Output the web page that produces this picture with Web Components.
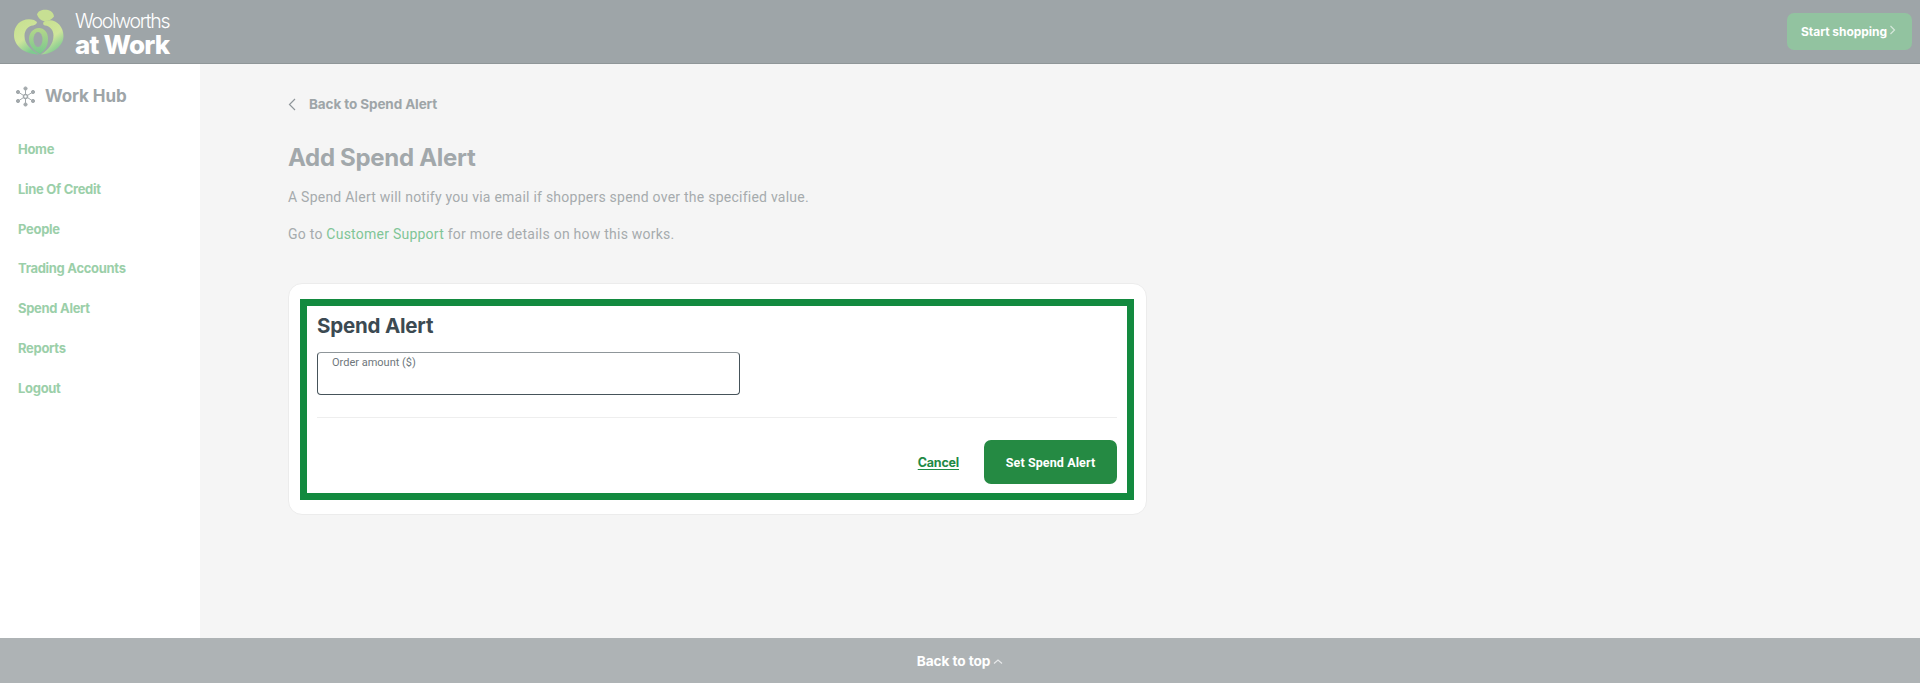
<!DOCTYPE html>
<html lang="en"><head><meta charset="utf-8"><title>Add Spend Alert</title>
<style>
html,body{margin:0;height:100%;overflow:hidden;background:#f5f5f5}
body{font-family:"Roboto",sans-serif}
wh-app{height:683px}
</style></head><body>
<wh-app>
  <wh-header slot="header"></wh-header>
  <wh-sidebar slot="side"></wh-sidebar>
  <wh-main slot="main"></wh-main>
  <wh-footer slot="footer"></wh-footer>
</wh-app>
<script>
function def(name,html){customElements.define(name,class extends HTMLElement{constructor(){super();this.attachShadow({mode:'open'}).innerHTML=html}})}
const head='"Inter","Lato",sans-serif';
def('wh-app',`<style>:host{display:grid;grid-template-columns:200px 1fr;grid-template-rows:64px 1fr 45px;width:1920px}
::slotted([slot=header]),::slotted([slot=footer]){grid-column:1/3}</style>
<slot name="header"></slot><slot name="side"></slot><slot name="main"></slot><slot name="footer"></slot>`);
def('wh-logo',`<style>:host{display:flex;align-items:center;gap:11px;color:#fff}
.w{display:flex;flex-direction:column;font-family:${head};margin-top:5px}
.a{font-size:19.5px;font-weight:300;letter-spacing:-1.3px;line-height:21px}
.b{font-size:26px;font-weight:800;letter-spacing:-.8px;line-height:25px}</style>
<svg width="50" height="46" viewBox="14 9 50 46" fill="none"><defs>
<linearGradient id="g" x1="0" y1="0" x2=".5" y2="1"><stop offset="0" stop-color="#c6df8f"/><stop offset=".6" stop-color="#cfe59b"/><stop offset="1" stop-color="#7fca90"/></linearGradient>
<linearGradient id="g2" x1="0" y1="0" x2="0" y2="1"><stop offset="0" stop-color="#b5d78a"/><stop offset="1" stop-color="#79c78e"/></linearGradient></defs>
<path d="M34 20C23 17 14 24 14 35C14 46 24 54 39 54.500C31 50 24.500 44 24.500 36C24.500 30 28 26 33 25.500C35 25 37 24 37 22Z" fill="url(#g)"/>
<path d="M44 21.500C54 17 63.500 25 63.500 36C63.500 46 53 54 41 54.500C48 50 53.500 44 53.500 35.500C53.500 30 50 26 45 25.500C43 25 42.500 23 44 21.500Z" fill="url(#g)"/>
<path d="M39 28C33 28.500 28.500 33 29 40C29.500 46 34 51 40 54C45 50 48 46 48 39C48 32 44 28 39 28Z" fill="url(#g2)"/>
<ellipse cx="38" cy="39.500" rx="4.500" ry="7.500" fill="#9ea5a8"/>
<path d="M26.500 38C26.500 32 30 27.500 36 26.500M51.500 37C51.500 32 48 27.500 42 26.500" stroke="#9ea5a8" stroke-width="2.200"/>
<path d="M37 14C38 10 43 8.500 48 9.500C52 10.500 53.500 13 54 16C51 20 46 21.500 42 20C40 19 38 17 37 14Z" fill="#c7df93" transform="translate(0 .5)"/></svg>
<div class="w"><span class="a">Woolworths</span><span class="b">at Work</span></div>`);
def('wh-header',`<style>:host{display:flex;align-items:center;justify-content:space-between;background:#9ea5a8;border-bottom:1px solid #8f9698;box-sizing:border-box;padding:0 8px 0 14px;height:64px}
a{display:flex;align-items:center;justify-content:space-between;box-sizing:border-box;width:125px;height:37px;padding:0 16px 0 14px;background:#92c3a0;border-radius:7px;color:#fff;font:700 12px ${head};letter-spacing:-.05px;margin-top:-1px}
svg{margin-top:-2px}</style>
<wh-logo></wh-logo><a>Start shopping<svg width="7" height="10" viewBox="0 0 7 10" fill="none" stroke="#d5e6da" stroke-width="1.2"><path d="M1.5 1l4 4-4 4"/></svg></a>`);
def('wh-sidebar',`<style>:host{display:flex;flex-direction:column;background:#fff;box-sizing:border-box;padding:20px 0 0 15px}
.t{display:flex;align-items:center;gap:9px;font:700 17px ${head};letter-spacing:-.1px;color:#9ea5a8;height:24px;margin-bottom:31px}
nav{display:flex;flex-direction:column;gap:19.8px;padding-left:3px}
a{font:700 13px/20px ${head};letter-spacing:-.3px;color:#9bcfa9}</style>
<div class="t"><svg width="21" height="21" viewBox="0 0 21 21" fill="#a3a9ac" stroke="#a3a9ac" stroke-width="1"><circle cx="10.5" cy="10.5" r="2" fill="none" stroke-width="1.5"/><path d="M10.500 8V3M10.500 13v5M8.300 9.300L4 6.500M12.700 9.300L17 6.500M8.300 11.700L4 14.500M12.700 11.700L17 14.500"/><circle cx="10.5" cy="2.500" r="1.600"/><circle cx="10.500" cy="18.500" r="1.600"/><circle cx="3" cy="6" r="1.600"/><circle cx="18" cy="6" r="1.600"/><circle cx="3" cy="15" r="1.600"/><circle cx="18" cy="15" r="1.600"/></svg>Work Hub</div>
<nav><a>Home</a><a>Line Of Credit</a><a>People</a><a>Trading Accounts</a><a>Spend Alert</a><a>Reports</a><a>Logout</a></nav>`);
def('wh-card',`<style>:host{display:block;box-sizing:border-box;width:859px;height:232px;background:#fff;border:1px solid #ececec;border-radius:14px;padding:15px 12px 13px 11px}
.box{box-sizing:border-box;height:201px;border:7.5px solid #138a3f;padding:5px 10px 9px 10px;display:flex;flex-direction:column}
h2{margin:0;font:700 20.5px/30px ${head};color:#3c4a52;letter-spacing:-.2px}
.f{box-sizing:border-box;width:423px;height:43px;margin-top:11px;border:1px solid #46535a;border-top-color:#8f969a;border-radius:4px;padding:3px 14px;font:400 11px/14px "Roboto",sans-serif;color:#6e777c}
hr{margin:22px 0 0;border:0;border-top:1px solid #eeeeee}
.act{display:flex;justify-content:flex-end;align-items:center;gap:25px;margin-top:22px}
a{font:700 12.5px ${head};color:#1f8a45;text-decoration:underline;text-underline-offset:2px;letter-spacing:-.2px}
button{width:133px;height:44px;border:0;border-radius:7px;background:#258a43;color:#fff;font:700 12.5px "Roboto",sans-serif;letter-spacing:.1px}</style>
<div class="box"><h2>Spend Alert</h2><div class="f">Order amount ($)</div><hr><div class="act"><a>Cancel</a><button>Set Spend Alert</button></div></div>`);
def('wh-main',`<style>:host{display:block;background:#f5f5f5;padding:30px 0 0 88px}
.back{display:flex;align-items:center;gap:13px;font:700 13.5px/20px ${head};letter-spacing:-.1px;color:#9ea5a8}
h1{margin:28px 0 0;font:700 24px/32px ${head};letter-spacing:-.3px;color:#a2a8ab}
p{margin:0;font:400 14px/20px "Roboto",sans-serif;color:#a6abad;letter-spacing:.24px}
.p1{margin-top:13px}.p2{margin-top:17px}
.p2 a{color:#80c597}
wh-card{margin-top:39px}</style>
<div class="back"><svg width="8" height="13" viewBox="0 0 8 13" fill="none" stroke="#8f969a" stroke-width="1.2"><path d="M7 1L1.500 6.500 7 12"/></svg>Back to Spend Alert</div>
<h1>Add Spend Alert</h1>
<p class="p1">A Spend Alert will notify you via email if shoppers spend over the specified value.</p>
<p class="p2">Go to <a>Customer Support</a> for more details on how this works.</p>
<wh-card></wh-card>`);
def('wh-footer',`<style>:host{display:flex;align-items:center;justify-content:center;gap:3px;background:#aeb3b5;color:#fff;font:700 13.7px ${head};letter-spacing:-.1px;padding-top:1px;box-sizing:border-box}</style>
Back to top<svg width="10" height="7" viewBox="0 0 10 7" fill="none" stroke="#e6e8e9" stroke-width="1.2"><path d="M1 5.500L5 2l4 3.500"/></svg>`);
</script>
</body></html>
